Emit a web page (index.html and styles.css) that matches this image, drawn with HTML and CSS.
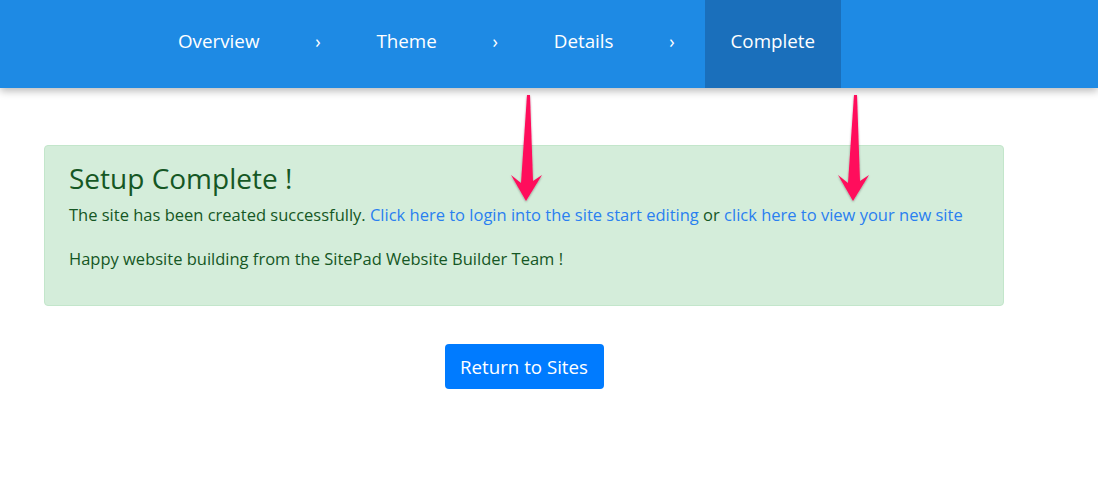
FILE: index.html
```html
<!DOCTYPE html>
<html>
<head>
<meta charset="utf-8">
<link rel="stylesheet" href="styles.css">
</head>
<body>
<header class="topbar">
  <nav class="steps">
    <div class="step">Overview</div>
    <div class="sep">›</div>
    <div class="step">Theme</div>
    <div class="sep">›</div>
    <div class="step">Details</div>
    <div class="sep">›</div>
    <div class="step active">Complete</div>
  </nav>
</header>
<main class="content">
  <div class="alert">
    <h2 class="alert-title">Setup Complete !</h2>
    <p class="alert-line">The site has been created successfully. <a href="#" class="link">Click here to login into the site start editing</a> or <a href="#" class="link">click here to view your new site</a></p>
    <p class="alert-line second">Happy website building from the SitePad Website Builder Team !</p>
  </div>
  <div class="actions">
    <button class="btn">Return to Sites</button>
  </div>
</main>
<svg class="arrow arrow-1" width="40" height="115" viewBox="0 0 40 115">
  <defs>
    <filter id="sh" x="-50%" y="-20%" width="200%" height="140%">
      <feDropShadow dx="0" dy="1" stdDeviation="1.2" flood-color="#000" flood-opacity="0.35"/>
    </filter>
  </defs>
  <polygon filter="url(#sh)" fill="#ff0f5b" points="18,2 21,2 24,88 33,82 17,108 2,82 12,90"/>
</svg>
<svg class="arrow arrow-2" width="40" height="115" viewBox="0 0 40 115">
  <polygon filter="url(#sh)" fill="#ff0f5b" points="18,2 21,2 24,88 33,82 17,108 2,82 12,90"/>
</svg>
</body>
</html>
```
FILE: styles.css
```css
* { box-sizing: border-box; }
html, body { margin: 0; padding: 0; background: #fff; }
body {
  font-family: "Open Sans", "Liberation Sans", sans-serif;
  width: 1098px;
  height: 492px;
  overflow: hidden;
  position: relative;
}
.topbar {
  height: 88px;
  background: #1e8ae4;
  box-shadow: 0 3px 8px rgba(0,0,0,0.28);
  position: relative;
  z-index: 1;
}
.steps {
  display: flex;
  height: 100%;
  padding-left: 152px;
}
.step {
  display: flex;
  align-items: center;
  padding: 0 26px 6px;
  color: #fff;
  font-size: 18.8px;
  height: 100%;
}
.step.active { background: #1a6fbb; }
.sep {
  width: 65px;
  display: flex;
  align-items: center;
  justify-content: center;
  color: #fff;
  font-size: 18px;
  height: 100%;
  padding-bottom: 6px;
}
.content {
  width: 960px;
  margin-left: 44px;
  padding-top: 57px;
}
.alert {
  background: #d4edda;
  border: 1px solid #c3e6cb;
  border-radius: 4px;
  color: #155724;
  padding: 14px 24px 28px;
  height: 161px;
}
.alert-title {
  margin: 0 0 6px;
  font-size: 28px;
  font-weight: 400;
  line-height: 37px;
}
.alert-line {
  margin: 0;
  font-size: 16.5px;
  line-height: 23px;
}
.alert-line.second { margin-top: 21px; }
.link { color: #2a7ff0; text-decoration: none; }
.actions {
  display: flex;
  justify-content: center;
  padding-top: 38px;
}
.btn {
  font-family: inherit;
  background: #007bff;
  color: #fff;
  border: none;
  border-radius: 4px;
  font-size: 18.7px;
  width: 159px;
  height: 45px;
  padding: 0;
}
.arrow { position: absolute; top: 93px; z-index: 2; }
.arrow-1 { left: 509px; }
.arrow-2 { left: 836px; }
```
